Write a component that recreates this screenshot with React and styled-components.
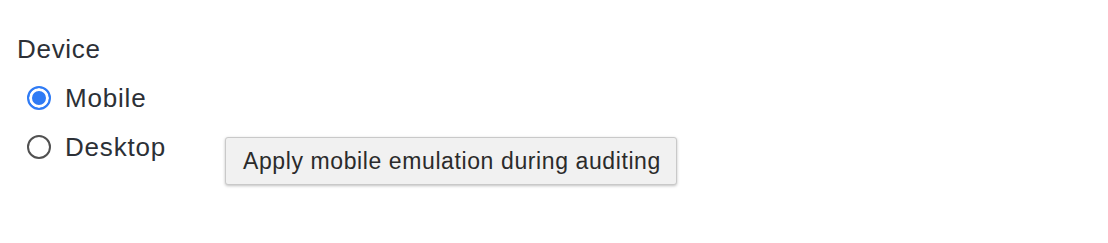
import React from 'react'
import styled, { createGlobalStyle } from 'styled-components'

const GlobalStyle = createGlobalStyle`
    html, body {
        margin: 0;
        padding: 0;
        background: #ffffff;
    }
    body {
        font-family: "Liberation Sans", Arial, sans-serif;
        color: #2c3036;
    }
`

const Page = styled.div`
    position: relative;
    width: 1108px;
    height: 243px;
    box-sizing: border-box;
    padding: 34px 0 0 17px;
`

const Fieldset = styled.div`
    display: flex;
    flex-direction: column;
    gap: 19px;
`

const Legend = styled.div`
    font-size: 26px;
    line-height: 30px;
    letter-spacing: 0.7px;
`

const Option = styled.label`
    display: flex;
    align-items: center;
    gap: 14px;
    height: 30px;
    padding-left: 10px;
    font-size: 26px;
    letter-spacing: 0.8px;
    cursor: pointer;
`

const Radio = styled.input.attrs({ type: 'radio' })`
    appearance: none;
    margin: 0;
    width: 24px;
    height: 24px;
    box-sizing: border-box;
    border-radius: 50%;
    border: 2px solid #515151;
    background: #ffffff;

    &:checked {
        border: 2.5px solid #2f7bf5;
        background: #2f7bf5;
        box-shadow: inset 0 0 0 3px #ffffff;
    }
`

const Tooltip = styled.div`
    position: absolute;
    left: 225px;
    top: 137px;
    width: 452px;
    height: 48px;
    box-sizing: border-box;
    padding: 0 17px;
    background: #f1f1f1;
    border: 1px solid #c9c9c9;
    border-radius: 3px;
    box-shadow: 0 1px 3px rgba(0, 0, 0, 0.25);
    font-size: 23px;
    line-height: 46px;
    letter-spacing: 0.6px;
    color: #2b2b2b;
    white-space: nowrap;
`

function App() {
    return (
        <>
            <GlobalStyle />
            <Page>
                <Fieldset>
                    <Legend>Device</Legend>
                    <Option>
                        <Radio name="device" defaultChecked />
                        Mobile
                    </Option>
                    <Option>
                        <Radio name="device" />
                        Desktop
                    </Option>
                </Fieldset>
                <Tooltip>Apply mobile emulation during auditing</Tooltip>
            </Page>
        </>
    )
}

export default App
